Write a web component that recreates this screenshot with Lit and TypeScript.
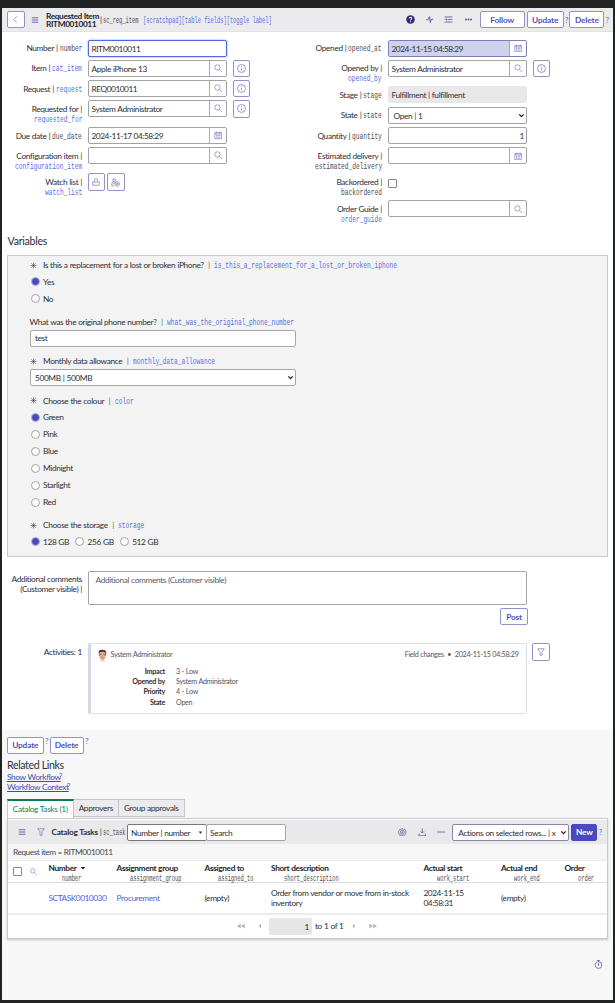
import { LitElement, html, css, svg, nothing } from "lit";
import { customElement } from "lit/decorators.js";
import { classMap } from "lit/directives/class-map.js";

const I: Record<string, any> = {
  back: svg`<path d="M10.5 2.5 5 8l5.500 5.500"/>`,
  menu: svg`<path d="M1.500 3.500h13M1.500 8h13M1.500 12.500h13" stroke-width="1.800"/>`,
  search: svg`<circle cx="6.500" cy="6.500" r="5"/><path d="m10.200 10.200 5 5"/>`,
  info: svg`<circle cx="8" cy="8" r="7"/><path d="M8 7v4.500M8 4v1.500"/>`,
  cal: svg`<path d="M1.500 3h13v11.500h-13zM1.500 5.500h13M4.500 1v3M11.500 1v3"/><path d="M4 8h2M7 8h2M10 8h2M4 11.500h2M7 11.500h2M10 11.500h2" stroke-width="1.800"/>`,
  lock: svg`<path d="M1.500 8h13v6.500h-13zM4.500 8V4.500a3.500 3.500 0 0 1 7 0V8"/>`,
  addme: svg`<circle cx="5.500" cy="3.800" r="2.500"/><path d="M5 14H1.500V10q0-3 4-3 1.500 0 2.500.6M4 10h2"/><circle cx="11" cy="10.500" r="4"/><path d="M11 8.500v4M9 10.500h4"/>`,
  filter: svg`<path d="M1.500 1.500h13L10 7.500v7h-4v-7z"/>`,
  help: svg`<circle cx="8" cy="8" r="7.500" fill="currentColor" stroke="none"/><path d="M5.700 6.300a2.300 2.300 0 1 1 3.300 2q-1 .5-1 1.500M8 11.200v1.700" stroke="#fff" stroke-width="1.800"/>`,
  pulse: svg`<path d="M2 8.500h3L8 3l1.500 10.500L11 7.500h3.500" stroke-width="1.500"/>`,
  sliders: svg`<path d="M1 3.500h8M12 3.500h3M1 8h2M6 8h9M1 12.500h8M12 12.500h3M10.500 1.700v3.600M4.500 6.200v3.600M10.500 10.700v3.600" stroke-width="1.300"/>`,
  dots: svg`<g fill="currentColor" stroke="none"><circle cx="3.500" cy="8" r="1.600"/><circle cx="8" cy="8" r="1.600"/><circle cx="12.500" cy="8" r="1.600"/></g>`,
  gear: svg`<path d="m8 1 2 1.300 2.500-.1.800 2.300 1.900 1.500L14.500 8l.7 2.100-1.900 1.500-.8 2.300-2.500-.1L8 15l-2-1.200-2.500.1-.8-2.300L.8 10.100 1.500 8 .8 6l1.900-1.500.8-2.300 2.500.1z"/><circle cx="8" cy="8" r="3.800"/><circle cx="8" cy="8" r="1.200"/>`,
  download: svg`<path d="M8 1v8M5 6.500l3 3 3-3M3.500 10.500 1.500 12v2.500h13V12l-2-1.500" stroke-width="1.400"/>`,
  minus: svg`<path d="M0 8h16" stroke-width="1.500"/>`,
  chev: svg`<path d="m3 5.500 5 5 5-5" stroke-width="3"/>`,
  tri: svg`<path d="M2 5h12l-6 7z" fill="currentColor" stroke="none"/>`,
  first: svg`<path d="M7.500 3v10L0 8zM15.500 3v10L8 8z" fill="currentColor" stroke="none"/>`,
  prev: svg`<path d="M11 2v12L4 8z" fill="currentColor" stroke="none"/>`,
  next: svg`<path d="M5 2v12l7-6z" fill="currentColor" stroke="none"/>`,
  last: svg`<path d="M.5 3v10L8 8zM8.500 3v10L16 8z" fill="currentColor" stroke="none"/>`,
  timer: svg`<circle cx="8" cy="9" r="6"/><path d="M5.500 1h5M8 1v2M8 5.500V9M13 3.500l1 1" stroke-width="1.300"/><circle cx="8" cy="9" r=".6" fill="currentColor"/>`,
  star: svg`<path d="M8 1v14M1 8h14M3 3l10 10M13 3 3 13" stroke-width="1.100"/>`,
};
const icon = (n: string, s = 9) =>
  html`<svg class="ic" viewBox="0 0 16 16" width=${s} height=${s} fill="none" stroke="currentColor" stroke-width="1.200">${I[n]}</svg>`;

/* Field names are set in a condensed monospace: fixed advance per character. */
const code = (t: string, adv = 3.73, link = false) =>
  html`<span class=${classMap({ code: true, small: adv < 3.5, link })} style="width:${(t.length * adv).toFixed(2)}px"><span class="glyphs">${t}</span></span>`;

type Field = { l: string; c: string; link?: boolean; h: number; k: string; v?: string; info?: boolean; two?: boolean };

const LEFT: Field[] = [
  { l: "Number", c: "number", h: 20.2, k: "focus", v: "RITM0010011" },
  { l: "Item", c: "cat_item", link: true, h: 20.2, k: "search", v: "Apple iPhone 13", info: true },
  { l: "Request", c: "request", link: true, h: 20.2, k: "search", v: "REQ0010011", info: true },
  { l: "Requested for", c: "requested_for", link: true, h: 26.7, k: "search", v: "System Administrator", info: true, two: true },
  { l: "Due date", c: "due_date", h: 20.3, k: "cal", v: "2024-11-17 04:58:29" },
  { l: "Configuration item", c: "configuration_item", link: true, h: 26.4, k: "search", v: "", two: true },
  { l: "Watch list", c: "watch_list", link: true, h: 26.6, k: "watch", two: true },
];
const RIGHT: Field[] = [
  { l: "Opened", c: "opened_at", h: 20.2, k: "calsel", v: "2024-11-15 04:58:29" },
  { l: "Opened by", c: "opened_by", link: true, h: 26.6, k: "search", v: "System Administrator", info: true, two: true },
  { l: "Stage", c: "stage", h: 20.3, k: "read", v: "Fulfillment | fulfillment" },
  { l: "State", c: "state", h: 20.4, k: "select", v: "Open | 1" },
  { l: "Quantity", c: "quantity", h: 20.3, k: "num", v: "1" },
  { l: "Estimated delivery", c: "estimated_delivery", h: 26.4, k: "cal", v: "", two: true },
  { l: "Backordered", c: "backordered", h: 26.7, k: "check", two: true },
  { l: "Order Guide", c: "order_guide", link: true, h: 20.2, k: "search", v: "", two: true },
];

@customElement("app-root")
export class AppRoot extends LitElement {
  static styles = css`
    :host { display: block; height: 1003px; box-sizing: border-box; padding: 8px 2px 3px; background: #222424;
      font: 8.3px/10px Lato, sans-serif; letter-spacing: -0.36px; word-spacing: 0.25px; color: #2e2e36; overflow: hidden; }
    * { box-sizing: border-box; }
    .dg { letter-spacing: -0.45px; }
    .ic { display: block; flex: none; }
    .code { display: inline-block; white-space: pre; line-height: 10px; height: 10px; vertical-align: top; letter-spacing: 0; word-spacing: 0; flex: none; }
    .glyphs { display: inline-block; transform-origin: 0 50%; transform: scaleX(0.691); font: 9px/10px "Liberation Mono", monospace; color: #4c4c54; }
    .small .glyphs { font-size: 8.5px; transform: scaleX(0.631); }
    .link .glyphs { color: #5870e0; }
    .page { height: 992px; background: #f7f7f8; }
    .sheet { background: #fff; height: 721.5px; }
    .head { height: 24px; background: #ebebed; display: flex; align-items: center; padding-left: 5px; border-bottom: 1px solid #e2e2e6; }
    .btn { height: 17px; border: 1px solid #9390cc; border-radius: 2px; background: #fff; color: #4f52bd; font-weight: 700; font-size: 8.3px; letter-spacing: -0.15px;
      display: flex; align-items: center; justify-content: center; flex: none; }
    .sq { width: 17.5px; height: 17.5px; }
    .head .title { font-weight: 700; line-height: 8px; margin-left: 7.500px; width: 54px; white-space: nowrap; font-size: 8.3px; letter-spacing: -0.37px; color: #1e1e28; }
    .head .bar { margin-right: 1px; }
    .icons { display: flex; gap: 10.300px; margin-left: auto; color: #4b4a8c; align-items: center; }
    .icons .dark { color: #2b2870; }
    .hm { margin-left: 6px; color: #5a59a8; }
    .q { color: #4f6bd8; font-size: 8px; width: 5.700px; text-align: center; flex: none; }
    .form { display: grid; grid-template-columns: 300px 1fr; padding: 7.5px 0 0 6px; height: 196px; }
    .row { display: flex; gap: 5.500px; }
    .lab { width: 74px; text-align: right; padding-top: 3.800px; white-space: nowrap; flex: none; }
    .lab .nm { display: flex; justify-content: flex-end; gap: 2px; }
    .lab .wrap { display: flex; justify-content: flex-end; }
    .ctl { width: 139.5px; height: 17px; border: 1px solid #a3a3a5; border-radius: 2px; display: flex; align-items: center; background: #fff; flex: none; }
    .val { flex: 1; padding-left: 3px; height: 100%; line-height: 16px; white-space: nowrap; }
    .add { width: 17px; height: 100%; border-left: 1px solid #aaa; display: flex; align-items: center; justify-content: center; color: #7472be; }
    .focus { border-color: #5066e0; box-shadow: 0 0 2px #6f86f0; }
    .read { background: #e8e8e9; border-color: #e8e8e9; }
    .calsel { border-color: #7d7fb8; }
    .calsel .val { background: #cfd2ec; }
    .num .val { text-align: right; padding-right: 2px; }
    .select .val { padding-left: 5px; }
    .select .ic { margin-right: 1px; color: #222; }
    .box { width: 9px; height: 9px; border: 1px solid #888; border-radius: 1px; background: #fff; margin-top: 5px; }
    .pair { display: flex; gap: 2px; }
    .l { color: #6765b5; }
    .h2 { font-size: 10.600px; line-height: 14px; color: #2e2e36; letter-spacing: -0.25px; }
    .rl { letter-spacing: -0.38px; }
    .vh { margin: 5.500px 0 0 5.500px; height: 21.500px; }
    .vars { margin: 0 5px; height: 301.5px; border: 1px solid #c9c9cb; background: #f3f3f3; padding: 1px 0 0 21.500px; }
    .vl { height: 16px; display: flex; align-items: center; white-space: nowrap; }
    .vl .st { width: 13.500px; }
    .vl .sep { margin: 0 4.500px; color: #666; }
    .rad { height: 17px; display: flex; align-items: center; padding-left: 1px; }
    .rad.r2 { gap: 6px; }
    .opt { display: flex; align-items: center; gap: 3.500px; }
    .o { width: 9px; height: 9px; border-radius: 50%; border: 1px solid #a3a3a3; background: #fff; }
    .o.on { background: #4a49c0; border-color: #b9b8dc; }
    .g { height: 6.500px; }
    .wide { width: 266px; height: 17px; border: 1px solid #a8a8aa; border-radius: 2px; background: #fff; display: flex; align-items: center; justify-content: space-between; padding: 0 1px 0 4.500px; }
    .wide .ic { color: #222; }
    .com { display: flex; padding: 14px 0 0 6px; gap: 5.500px; }
    .ta { width: 439.5px; height: 34.5px; border: 1px solid #a5a5a8; border-radius: 2px; padding: 3.500px 7px; color: #5b5b66; }
    .post { width: 27.5px; margin: 3px 0 0 498.3px; }
    .act { display: flex; padding: 18.200px 0 0 6px; gap: 5.500px; }
    .card { width: 439px; height: 70.5px; border: 1px solid #e0e0e6; border-left: 3px solid #d5d5e5; border-radius: 2px; padding: 4.200px 7px 0; font-size: 7.200px; letter-spacing: -0.3px; color: #55555f; }
    .ch { display: flex; align-items: center; height: 14px; gap: 4px; }
    .ch .when { margin-left: auto; white-space: pre; }
    .kv { display: grid; grid-template-columns: 67.5px 1fr; column-gap: 11px; line-height: 10.050px; padding-top: 5px; }
    .kv b { text-align: right; color: #2e2e36; }
    .foot { padding: 7px 5px 0; }
    .btns { display: flex; height: 18px; }
    .btns .q { margin-top: -1px; width: 6px; }
    .rl { margin-top: 3.300px; height: 14.700px; }
    .lk { color: #3c4caf; height: 9.700px; display: flex; }
    .lk u { text-underline-offset: 1px; }
    .lk .q { width: auto; margin-left: -2px; line-height: 9px; }
    .tabs { display: flex; margin-top: 6.800px; height: 19px; }
    .tab { border: 1px solid #c4c4d0; border-left: 0; background: #ebebee; display: flex; align-items: center; justify-content: center; height: 18.5px; white-space: nowrap; }
    .tab.on { border-left: 1px solid #c4c4d0; border-top: 2px solid #0a7a56; border-bottom: 0; background: #fff; color: #0f8560; height: 19px; padding-bottom: 1px; }
    .list { border: 1px solid #c9c9cd; background: #fff; height: 121.5px; box-shadow: 0 1px 2px #0003; padding-top: 1.500px; }
    .tb { height: 24px; background: #e9e9ec; display: flex; align-items: center; padding-left: 10px; white-space: nowrap; }
    .tb b { letter-spacing: -0.3px; }
    .tb .ctl { background: #fff; }
    .crumb { height: 16.5px; background: #f6f6f7; border-bottom: 1px solid #ececee; padding: 3px 5px; color: #484852; }
    .cols { display: grid; grid-template-columns: 17px 18.5px 68px 88px 66.5px 152.5px 77.5px 63.5px 1fr; padding-left: 5px; }
    .hd { height: 22.5px; border-bottom: 1px solid #ddd; font-weight: 700; color: #1e1e28; }
    .hd .c { padding-top: 2.500px; white-space: nowrap; }
    .hd .c .sub { padding-left: 13.300px; display: block; height: 10px; font-weight: 400; }
    .hd .t { display: flex; gap: 3px; align-items: center; }
    .bd { height: 31.5px; border-bottom: 2px solid #ececee; align-items: center; }
    .bd span { white-space: nowrap; }
    .bd .a { color: #4a63d8; }
    .pg { height: 23px; display: flex; align-items: center; padding-left: 229px; color: #b4b4cc; }
    .pg .n { width: 43px; height: 17px; background: #e6e6e8; border-radius: 2px; margin: 0 3px 0 6px; color: #2e2e36; text-align: right; padding: 4px 3px; }
    .pg .of { color: #2e2e36; width: 34px; white-space: nowrap; }
    .tm { display: flex; justify-content: flex-end; padding: 20.500px 5px 0 0; color: #4b4a8c; }
  `;

  control(f: Field) {
    if (f.k === "watch") return html`<div class="pair"><div class="btn sq l">${icon("lock", 8)}</div><div class="btn sq l">${icon("addme", 9)}</div></div>`;
    if (f.k === "check") return html`<div class="box"></div>`;
    const add = f.k === "search" ? "search" : f.k.startsWith("cal") ? "cal" : "";
    return html`<div class="ctl ${f.k}"><div class=${classMap({ val: true, dg: /\d{3}/.test(f.v ?? "") })}>${f.v}</div>
      ${add ? html`<div class="add">${icon(add, 8.5)}</div>` : nothing}${f.k === "select" ? icon("chev", 7) : nothing}</div>`;
  }
  field(f: Field) {
    return html`<div class="row" style="height:${f.h}px">
      <div class="lab"><div class="nm"><span>${f.l} |</span>${f.two ? nothing : code(f.c, 3.73, f.link)}</div>
        ${f.two ? html`<div class="wrap">${code(f.c, 3.73, f.link)}</div>` : nothing}</div>
      ${this.control(f)}${f.info ? html`<div class="btn sq l">${icon("info", 9)}</div>` : nothing}</div>`;
  }
  vlabel(t: string, c: string, req = true) {
    return html`<div class="vl">${req ? html`<span class="st">${icon("star", 7)}</span>` : nothing}${t}<span class="sep">|</span>${code(c, 3.73, true)}</div>`;
  }
  opt(t: string, on = false) {
    return html`<div class="opt"><span class=${classMap({ o: true, on })}></span>${t}</div>`;
  }
  col(t: string, c: string, sort = false) {
    return html`<div class="c"><div class="t">${t}${sort ? icon("tri", 6) : nothing}</div><span class="sub">${code(c, 3.22)}</span></div>`;
  }

  render() {
    return html`<div class="page">
      <div class="sheet">
        <div class="head">
          <div class="btn sq l">${icon("back", 9)}</div><span class="hm">${icon("menu", 8)}</span>
          <div class="title">Requested Item<br />RITM0010011</div><span class="bar">|</span>${code("sc_req_item", 3.3)}<span>&nbsp;&nbsp;</span>${code("[scratchpad][table fields][toggle label]", 3.2, true)}
          <div class="icons"><span class="dark">${icon("help", 9)}</span>${icon("pulse", 9)}${icon("sliders", 9)}${icon("dots", 9)}</div>
          <div class="btn" style="width:45px;margin-left:7px">Follow</div><div class="btn" style="width:37px;margin-left:2px">Update</div><span class="q">?</span>
          <div class="btn" style="width:35px">Delete</div><span class="q" style="margin-right:3px">?</span>
        </div>
        <div class="form"><div>${LEFT.map((f) => this.field(f))}</div><div>${RIGHT.map((f) => this.field(f))}</div></div>
        <div class="h2 vh">Variables</div>
        <div class="vars">
          ${this.vlabel("Is this a replacement for a lost or broken iPhone?", "is_this_a_replacement_for_a_lost_or_broken_iphone")}
          <div class="rad">${this.opt("Yes", true)}</div><div class="rad">${this.opt("No")}</div>
          <div class="g"></div>
          ${this.vlabel("What was the original phone number?", "what_was_the_original_phone_number", false)}
          <div class="wide">test</div><div class="g"></div>
          ${this.vlabel("Monthly data allowance", "monthly_data_allowance")}
          <div class="wide">500MB | 500MB${icon("chev", 7)}</div><div class="g"></div>
          ${this.vlabel("Choose the colour", "color")}
          ${["Green", "Pink", "Blue", "Midnight", "Starlight", "Red"].map((c, i) => html`<div class="rad">${this.opt(c, i === 0)}</div>`)}
          <div class="g"></div>
          ${this.vlabel("Choose the storage", "storage")}
          <div class="rad r2">${this.opt("128 GB", true)}${this.opt("256 GB")}${this.opt("512 GB")}</div>
        </div>
        <div class="com"><div class="lab">Additional comments<br />(Customer visible) |</div><div class="ta">Additional comments (Customer visible)</div></div>
        <div class="btn post">Post</div>
        <div class="act"><div class="lab">Activities: 1</div>
          <div class="card">
            <div class="ch">
              <svg class="ic" width="9" height="13" viewBox="0 0 9 13"><path d="M.8 5Q0 1 3 .8 8 0 8.300 3.500L8 7H1z" fill="#4b3a32"/><path d="M1.300 3.800Q4 2 7.500 3.500v4Q7 11 4.500 11.500 2 11 1.300 8z" fill="#e8ab8f"/><path d="M2 5.500h1.700M5.200 5.500h1.700" stroke="#4b3028" stroke-width=".5"/><path d="M2.700 8.300q1.800 1.500 3.500 0z" fill="#fff" stroke="#b0604c" stroke-width=".4"/><path d="M2.500 11q2 1 4 0l1 2h-5z" fill="#dce0ea"/></svg>
              <span>System Administrator</span><span class="when">Field changes&nbsp; •&nbsp; 2024-11-15 04:58:29</span></div>
            <div class="kv"><b>Impact</b><span>3 - Low</span><b>Opened by</b><span>System Administrator</span><b>Priority</b><span>4 - Low</span><b>State</b><span>Open</span></div>
          </div><div class="btn sq l">${icon("filter", 8)}</div></div>
      </div>
      <div class="foot">
        <div class="btns"><div class="btn" style="width:36.500px">Update</div><span class="q">?</span><div class="btn" style="width:34px">Delete</div><span class="q">?</span></div>
        <div class="h2 rl">Related Links</div>
        <div class="lk"><u>Show Workflow</u><span class="q">?</span></div><div class="lk"><u>Workflow Context</u><span class="q">?</span></div>
        <div class="tabs"><div class="tab on" style="width:66.500px">Catalog Tasks (1)</div><div class="tab" style="width:45.500px">Approvers</div><div class="tab" style="width:65.500px">Group approvals</div></div>
        <div class="list">
          <div class="tb"><span class="hm" style="margin:0">${icon("menu", 8)}</span><span class="hm" style="margin:0 6.500px 0 11px">${icon("filter", 8)}</span>
            <b>Catalog Tasks</b><span>&nbsp;|&nbsp;</span>${code("sc_task", 3.22)}
            <div class="ctl" style="width:80px;margin-left:1px;border-color:#777"><div class="val">Number | number</div><span style="margin-right:3px">${icon("tri", 5)}</span></div>
            <div class="ctl" style="width:80px;margin-left:-1px"><div class="val">Search</div></div>
            <div class="icons" style="gap:11px">${icon("gear", 8.5)}${icon("download", 8.5)}${icon("minus", 8)}</div>
            <div class="ctl select" style="width:117px;margin-left:7px;border-color:#8886ac"><div class="val">Actions on selected rows... | x</div>${icon("chev", 7)}</div>
            <div class="btn" style="width:26px;margin-left:2px;background:#4a49c0;color:#fff;border-color:#4a49c0">New</div><span class="q" style="margin-right:4px">?</span>
          </div>
          <div class="crumb dg">Request item = RITM0010011</div>
          <div class="cols hd"><div class="box" style="margin-top:6.500px"></div><span class="l" style="padding-top:7px">${icon("search", 7)}</span>
            ${this.col("Number", "number", true)}${this.col("Assignment group", "assignment_group")}${this.col("Assigned to", "assigned_to")}${this.col("Short description", "short_description")}${this.col("Actual start", "work_start")}${this.col("Actual end", "work_end")}${this.col("Order", "order")}</div>
          <div class="cols bd"><span></span><span></span><span class="a dg">SCTASK0010030</span><span class="a">Procurement</span><span>(empty)</span><span>Order from vendor or move from in-stock<br />inventory</span><span class="dg">2024-11-15<br />04:58:31</span><span>(empty)</span><span></span></div>
          <div class="pg">${icon("first", 8)}<span style="margin-left:12px">${icon("prev", 6)}</span><div class="n">1</div><span class="of">to 1 of 1</span><span style="margin:0 12px 0 2px">${icon("next", 6)}</span>${icon("last", 8)}</div>
        </div>
        <div class="tm">${icon("timer", 9)}</div>
      </div>
    </div>`;
  }
}
